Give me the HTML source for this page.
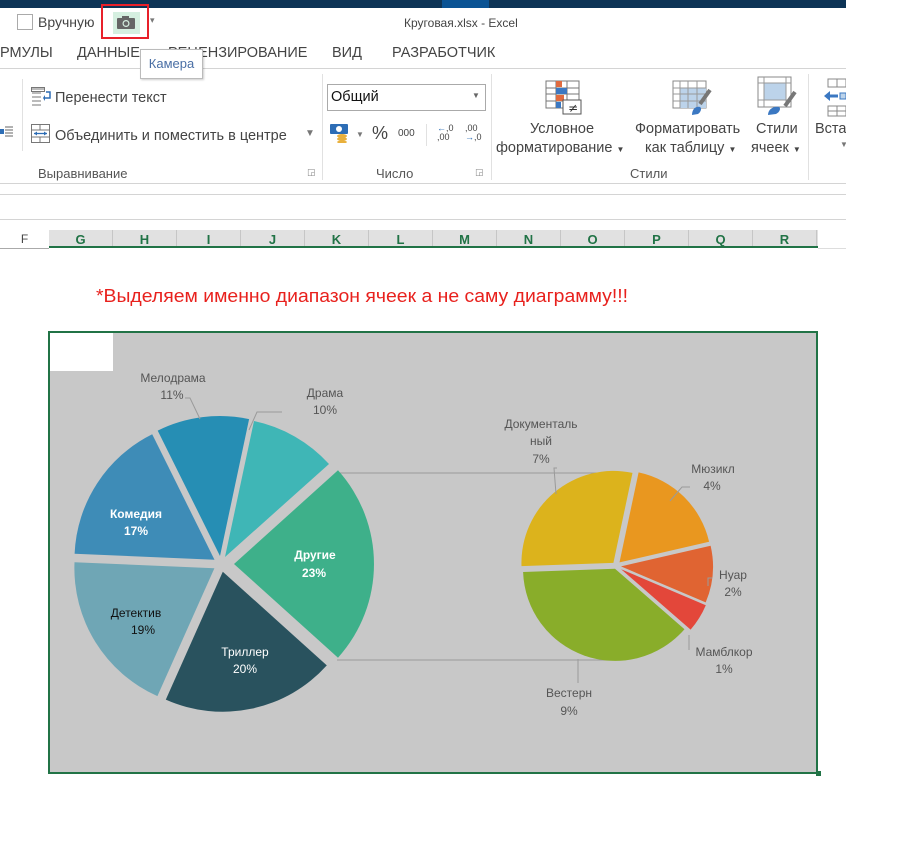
<!DOCTYPE html>
<html><head><meta charset="utf-8"><style>
body{margin:0;width:922px;height:852px;background:#fff;position:relative;overflow:hidden;font-family:"Liberation Sans","DejaVu Sans",sans-serif;color:#444}
.a{position:absolute;white-space:nowrap}
.hl{position:absolute;left:0;width:846px;height:1px;background:#d4d4d4}
.vs{position:absolute;width:1px;background:#e1e1e1}
.col{position:absolute;top:230px;height:18px;width:63px;border-right:1px solid #c6c6c6;text-align:center;font:bold 13px "Liberation Sans",sans-serif;color:#217346;line-height:19px}
</style></head><body>
<div class="a" style="left:0;top:0;width:846px;height:8px;background:#0d3456"></div>
<div class="a" style="left:442px;top:0;width:47px;height:8px;background:#0a5394"></div>
<div class="a" style="left:17px;top:14px;width:14px;height:14px;border:1px solid #aaa;background:#fff"></div>
<div class="a" style="left:38px;top:14px;font-size:14px;color:#444">Вручную</div>
<div class="a" style="left:113px;top:12px;width:27px;height:22px;background:#d5efe0"></div>
<div class="a" style="left:101px;top:4px;width:44px;height:31px;border:2px solid #e8202a"></div>
<svg class="a" style="left:116px;top:15px" width="20" height="15"><rect x="1" y="3" width="18" height="11" rx="1" fill="#666"/><rect x="6" y="1" width="7" height="3" fill="#666"/><circle cx="10" cy="8.5" r="3.5" fill="#d5efe0"/><circle cx="10" cy="8.5" r="2.3" fill="#666"/></svg>
<div class="a" style="left:150px;top:15px;font-size:9px;color:#777">▾</div>
<div class="a" style="left:404px;top:16px;font-size:12px;color:#444">Круговая.xlsx - Excel</div>
<div class="a" style="left:0;top:45px;font-size:14.5px;color:#444">РМУЛЫ</div>
<div class="a" style="left:77px;top:45px;font-size:14.5px;color:#444">ДАННЫЕ</div>
<div class="a" style="left:168px;top:45px;font-size:14.5px;color:#444">РЕЦЕНЗИРОВАНИЕ</div>
<div class="a" style="left:332px;top:45px;font-size:14.5px;color:#444">ВИД</div>
<div class="a" style="left:392px;top:45px;font-size:14.5px;color:#444">РАЗРАБОТЧИК</div>
<div class="hl" style="top:68px;background:#d4d4d4"></div>
<div class="a" style="left:140px;top:49px;width:61px;height:28px;background:#fff;border:1px solid #bbb;box-shadow:1px 1px 2px rgba(0,0,0,.2);font-size:13px;color:#4a6fa5;line-height:28px;text-align:center">Камера</div>
<div class="vs" style="left:22px;top:79px;height:72px"></div>
<div class="vs" style="left:322px;top:74px;height:106px"></div>
<div class="vs" style="left:491px;top:74px;height:106px"></div>
<div class="vs" style="left:808px;top:74px;height:106px"></div>
<svg class="a" style="left:0;top:126px" width="14" height="12"><rect x="0" y="3" width="4" height="5" fill="#2d6db5"/><path d="M5 1h8M5 4h8M5 7h8M5 10h8" stroke="#666"/></svg>
<svg class="a" style="left:31px;top:87px" width="22" height="20"><path d="M1 2h12M1 6h9M1 10h9M1 14h9M1 18h9" stroke="#777"/><rect x="0.5" y="0.5" width="13" height="4" fill="none" stroke="#777"/><path d="M15 5h4v6h-5" stroke="#2d6db5" stroke-width="1.5" fill="none"/><path d="M14 8l-2 3 2 3z" fill="#2d6db5"/></svg>
<div class="a" style="left:55px;top:90px;font-size:14.5px;color:#444">Перенести текст</div>
<svg class="a" style="left:31px;top:124px" width="19" height="20"><rect x="0.5" y="0.5" width="18" height="18" fill="none" stroke="#777"/><path d="M0 6h19M0 13h19M9 0v6M9 13v6" stroke="#777"/><path d="M3 9.5h13" stroke="#2d6db5" stroke-width="1.3"/><path d="M3 9.5l3-2v4zM16 9.5l-3-2v4z" fill="#2d6db5"/></svg>
<div class="a" style="left:55px;top:128px;font-size:14.5px;color:#444">Объединить и поместить в центре</div>
<div class="a" style="left:305px;top:128px;font-size:10px;color:#777">▼</div>
<div class="a" style="left:38px;top:166px;font-size:13px;color:#555">Выравнивание</div>
<div class="a" style="left:307px;top:167px;font-size:9px;color:#888">◲</div>
<div class="a" style="left:327px;top:84px;width:157px;height:25px;border:1px solid #aaa"></div>
<div class="a" style="left:331px;top:89px;font-size:14.5px;color:#111">Общий</div>
<div class="a" style="left:472px;top:91px;font-size:8px;color:#666">▼</div>
<svg class="a" style="left:329px;top:123px" width="22" height="20"><rect x="1" y="1" width="18" height="10" rx="1" fill="#2d6db5"/><circle cx="10" cy="6" r="3" fill="#fff"/><ellipse cx="13" cy="13" rx="5" ry="2" fill="#e9b03c"/><ellipse cx="13" cy="16" rx="5" ry="2" fill="#e9b03c"/><ellipse cx="13" cy="19" rx="5" ry="1.5" fill="#e9b03c"/></svg>
<div class="a" style="left:356px;top:130px;font-size:8px;color:#777">▼</div>
<div class="a" style="left:372px;top:123px;font-size:18px;color:#444">%</div>
<div class="a" style="left:398px;top:128px;font-size:10px;color:#444">000</div>
<div class="vs" style="left:426px;top:124px;height:22px"></div>
<div class="a" style="left:437px;top:124px;font-size:9px;color:#444;line-height:9px"><span style="color:#2d6db5">←</span>,0<br>,00</div>
<div class="a" style="left:465px;top:124px;font-size:9px;color:#444;line-height:9px">,00<br><span style="color:#2d6db5">→</span>,0</div>
<div class="a" style="left:376px;top:166px;font-size:13px;color:#555">Число</div>
<div class="a" style="left:475px;top:167px;font-size:9px;color:#888">◲</div>
<svg class="a" style="left:545px;top:80px" width="40" height="36"><g stroke="#777" fill="#fff"><rect x="1" y="1" width="33" height="27"/></g><path d="M1 8h33M1 14h33M1 21h33M11 1v27M22 1v27" stroke="#777"/><rect x="11" y="1" width="6" height="6" fill="#e06b3f"/><rect x="11" y="8" width="11" height="6" fill="#3b78c2"/><rect x="11" y="15" width="8" height="6" fill="#e06b3f"/><rect x="11" y="22" width="5" height="6" fill="#3b78c2"/><rect x="18" y="20" width="18" height="14" fill="#fff" stroke="#555"/><text x="23" y="32" font-size="12" fill="#333" font-family="DejaVu Sans">≠</text></svg>
<div class="a" style="left:530px;top:121px;font-size:14.5px;color:#444">Условное</div>
<div class="a" style="left:496px;top:140px;font-size:14.5px;color:#444">форматирование <span style="font-size:8px">▼</span></div>
<svg class="a" style="left:672px;top:80px" width="40" height="36"><rect x="1" y="1" width="33" height="27" fill="#fff" stroke="#888"/><rect x="8" y="8" width="26" height="20" fill="#bcd3ea"/><path d="M1 8h33M1 14h33M1 21h33M8 1v27M16 1v27M25 1v27" stroke="#999"/><path d="M38 10l-10 14" stroke="#777" stroke-width="4"/><path d="M20 35c0-6 4-9 8-8 2 1 1 5-2 7z" fill="#3b78c2"/></svg>
<div class="a" style="left:635px;top:121px;font-size:14.5px;color:#444">Форматировать</div>
<div class="a" style="left:645px;top:140px;font-size:14.5px;color:#444">как таблицу <span style="font-size:8px">▼</span></div>
<svg class="a" style="left:757px;top:76px" width="40" height="40"><rect x="1" y="1" width="33" height="30" fill="#fff" stroke="#888"/><rect x="7" y="7" width="22" height="17" fill="#bcd3ea"/><path d="M1 7h33M1 24h33M7 1v30M29 1v30" stroke="#999"/><path d="M38 16l-10 14" stroke="#777" stroke-width="4"/><path d="M11 39c0-6 6-9 11-8 2 1 1 5-3 7z" fill="#3b78c2"/></svg>
<div class="a" style="left:756px;top:121px;font-size:14.5px;color:#444">Стили</div>
<div class="a" style="left:751px;top:140px;font-size:14.5px;color:#444">ячеек <span style="font-size:8px">▼</span></div>
<div class="a" style="left:630px;top:166px;font-size:13px;color:#555">Стили</div>
<svg class="a" style="left:824px;top:78px" width="22" height="40"><path d="M4 1h18v8H4zM4 28h18v10H4zM13 1v8M13 28v10M4 33h18" stroke="#888" fill="none"/><path d="M2 18h12" stroke="#3b78c2" stroke-width="3"/><path d="M0 18l6-5v10z" fill="#3b78c2"/><rect x="16" y="15" width="6" height="6" fill="#bcd3ea" stroke="#3b78c2"/></svg>
<div class="a" style="left:815px;top:121px;font-size:14.5px;color:#444;width:31px;overflow:hidden">Вставить</div>
<div class="a" style="left:840px;top:140px;font-size:8px;color:#777">▼</div>
<div class="a" style="left:846px;top:0;width:76px;height:260px;background:#fff"></div>
<div class="hl" style="top:183px"></div>
<div class="hl" style="top:194px"></div>
<div class="hl" style="top:219px"></div>
<div class="a" style="left:0;top:230px;width:49px;height:18px;text-align:center;font-size:12px;color:#444;line-height:19px">F</div>
<div class="a" style="left:49px;top:230px;width:769px;height:18px;background:#e1e1e1"></div>
<div class="col" style="left:49px">G</div><div class="col" style="left:113px">H</div><div class="col" style="left:177px">I</div><div class="col" style="left:241px">J</div><div class="col" style="left:305px">K</div><div class="col" style="left:369px">L</div><div class="col" style="left:433px">M</div><div class="col" style="left:497px">N</div><div class="col" style="left:561px">O</div><div class="col" style="left:625px">P</div><div class="col" style="left:689px">Q</div><div class="col" style="left:753px">R</div>
<div class="a" style="left:49px;top:246px;width:769px;height:2px;background:#217346"></div>
<div class="a" style="left:0;top:248px;width:49px;height:1px;background:#aaa"></div>
<div class="a" style="left:818px;top:248px;width:28px;height:1px;background:#ddd"></div>
<svg class="a" style="left:0;top:0" width="922" height="852">
<text x="96" y="302" font-size="18" fill="#e8211d" textLength="532" lengthAdjust="spacingAndGlyphs" font-family="Liberation Sans">*Выделяем именно диапазон ячеек а не саму диаграмму!!!</text>
<rect x="49" y="332" width="768" height="441" fill="#c8c8c8" stroke="#217346" stroke-width="2"/>
<rect x="816" y="771" width="5" height="5" fill="#217346"/>
<rect x="50" y="333" width="63" height="38" fill="#fff"/>
<g stroke="#9a9a9a" fill="none" stroke-width="1"><path d="M337 473H630M337 660H616"/></g>
<g transform="translate(1,1)">
<path d="M224 556L253 420A140 140 0 0 1 328 463Z" fill="#3fb6b6"/>
<path d="M233 563L337 469.3A140 140 0 0 1 337 656.7Z" fill="#3eb08a"/>
<path d="M221.8 570.7L325.8 664.4A140 140 0 0 1 164.8 698.6Z" fill="#29525e"/>
<path d="M213.4 567.2L156.4 695.1A140 140 0 0 1 73.5 561.3Z" fill="#6fa6b5"/>
<path d="M213.5 558.7L73.6 552.8A140 140 0 0 1 151.2 433.3Z" fill="#3e8cb7"/>
<path d="M219 555L156.7 429.6A140 140 0 0 1 248.1 418.1Z" fill="#268eb4"/>
</g>
<g transform="translate(4,0)">
<path d="M609.4 562.9L517.5 566.1A92 92 0 0 1 628.5 472.9Z" fill="#dcb31c"/>
<path d="M615.5 562.4L634.6 472.4A92 92 0 0 1 705.1 541.7Z" fill="#e9971f"/>
<path d="M617 566.4L706.6 545.7A92 92 0 0 1 701.7 602.4Z" fill="#e06432"/>
<path d="M617.1 569.2L701.8 605.2A92 92 0 0 1 686.6 629.6Z" fill="#e3473a"/>
<path d="M611 568.8L680.5 629.2A92 92 0 0 1 519.1 572Z" fill="#89ad2a"/>
</g>
<g stroke="#9a9a9a" fill="none"><path d="M185 398h5l10 21M282 412h-25l-8 18M557 468h-3l2 26M690 487h-8l-12 14M712 578h-4v8M689 650v-15M578 683v-24"/></g>
<g font-family="Liberation Sans" font-size="12" fill="#555" text-anchor="middle">
<text x="173" y="382">Мелодрама</text><text x="172" y="399">11%</text>
<text x="325" y="397">Драма</text><text x="325" y="414">10%</text>
<text x="541" y="428">Документаль</text><text x="541" y="445">ный</text><text x="541" y="463">7%</text>
<text x="713" y="473">Мюзикл</text><text x="712" y="490">4%</text>
<text x="733" y="579">Нуар</text><text x="733" y="596">2%</text>
<text x="724" y="656">Мамблкор</text><text x="724" y="673">1%</text>
<text x="569" y="697">Вестерн</text><text x="569" y="715">9%</text>
<text x="136" y="617" fill="#111">Детектив</text><text x="143" y="634" fill="#111">19%</text>
</g>
<g font-family="Liberation Sans" font-size="12" fill="#fff" text-anchor="middle">
<text x="136" y="518" font-weight="bold">Комедия</text><text x="136" y="535" font-weight="bold">17%</text>
<text x="315" y="559" font-weight="bold">Другие</text><text x="314" y="577" font-weight="bold">23%</text>
<text x="245" y="656">Триллер</text><text x="245" y="673">20%</text>
</g>
</svg>
</body></html>
